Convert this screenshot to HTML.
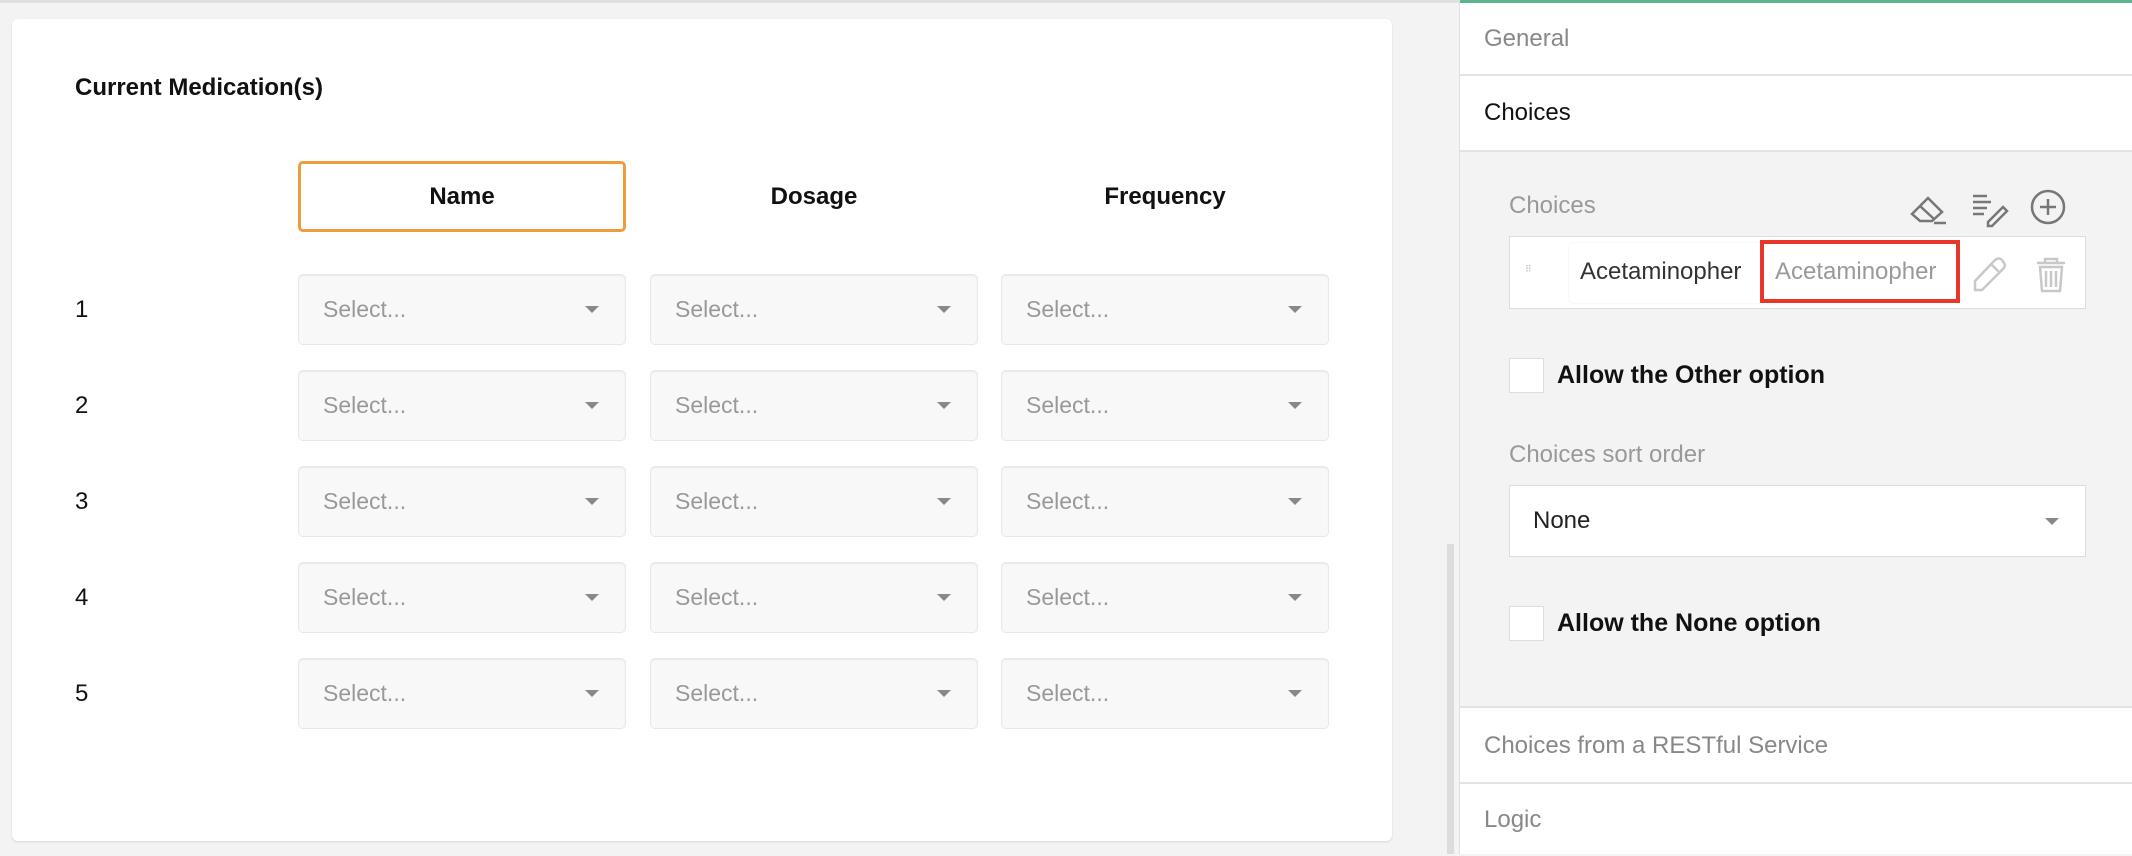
<!DOCTYPE html>
<html><head><meta charset="utf-8"><style>
*{margin:0;padding:0;box-sizing:border-box}
body{width:2132px;height:854px;overflow:hidden;background:#f3f3f3;font-family:"Liberation Sans",sans-serif;position:relative}
.a{position:absolute}
.card{left:12px;top:19px;width:1380px;height:822px;background:#fff;border-radius:6px;box-shadow:0 1px 2px rgba(0,0,0,.12)}
.sel{position:absolute;width:328px;height:71px;background:#f8f8f8;border:1px solid #e8e8e8;border-radius:5px;box-shadow:inset 0 1px 1px rgba(0,0,0,.06);color:#999;font-size:23px;line-height:69px;padding-left:24px}
.sel:after{content:"";position:absolute;right:26px;top:31px;border-left:7px solid transparent;border-right:7px solid transparent;border-top:7px solid #888}
.hdr{position:absolute;top:161px;height:71px;width:328px;text-align:center;font-size:24px;font-weight:bold;line-height:71px;color:#111}
.num{position:absolute;left:75px;font-size:24px;color:#111}
.panel{left:1459px;top:0;width:673px;height:854px;background:#fff;border-left:1px solid #e0e0e0}
.tab{position:absolute;left:0;width:673px;font-size:24px;color:#888;padding-left:24px;border-bottom:2px solid #e3e3e3}
.cb{position:absolute;left:49px;width:35px;height:35px;background:#fff;border:1px solid #ddd}
.cbl{position:absolute;left:97px;font-size:25px;font-weight:bold;color:#111}
</style></head><body>
<div class="a" style="left:0;top:0;width:1459px;height:3px;background:#e0e0e0"></div>
<div class="a card"></div>
<div class="a" style="left:75px;top:74px;font-size:24px;font-weight:bold;color:#111">Current Medication(s)</div>
<div class="hdr" style="left:298px;border:3px solid #f09c3c;border-radius:5px;line-height:65px">Name</div>
<div class="hdr" style="left:650px">Dosage</div>
<div class="hdr" style="left:1001px">Frequency</div>

<div class="num" style="top:296px">1</div>
<div class="num" style="top:392px">2</div>
<div class="num" style="top:488px">3</div>
<div class="num" style="top:584px">4</div>
<div class="num" style="top:680px">5</div>

<div class="sel" style="left:298px;top:274px">Select...</div><div class="sel" style="left:650px;top:274px">Select...</div><div class="sel" style="left:1001px;top:274px">Select...</div>
<div class="sel" style="left:298px;top:370px">Select...</div><div class="sel" style="left:650px;top:370px">Select...</div><div class="sel" style="left:1001px;top:370px">Select...</div>
<div class="sel" style="left:298px;top:466px">Select...</div><div class="sel" style="left:650px;top:466px">Select...</div><div class="sel" style="left:1001px;top:466px">Select...</div>
<div class="sel" style="left:298px;top:562px">Select...</div><div class="sel" style="left:650px;top:562px">Select...</div><div class="sel" style="left:1001px;top:562px">Select...</div>
<div class="sel" style="left:298px;top:658px">Select...</div><div class="sel" style="left:650px;top:658px">Select...</div><div class="sel" style="left:1001px;top:658px">Select...</div>

<div class="a" style="left:1447px;top:544px;width:7px;height:310px;background:#dcdcdc"></div>

<div class="a panel">
  <div class="a" style="left:0;top:0;width:673px;height:3px;background:#5db491"></div>
  <div class="tab" style="top:3px;height:73px;line-height:72px">General</div>
  <div class="tab" style="top:76px;height:76px;line-height:74px;color:#111">Choices</div>
  <div class="a" style="left:0;top:152px;width:673px;height:556px;background:#f3f3f3;border-bottom:2px solid #e3e3e3">
    <div class="a" style="left:49px;top:40px;font-size:24px;color:#999">Choices</div>
    <svg class="a" style="left:448px;top:36px" width="160" height="40" viewBox="0 0 160 40" fill="none" stroke="#777" stroke-width="2.5">
      <path d="M4 26 L20 10 L34 24 L24 33 L12 33 Z M12 18 L26 31"/><path d="M26 35 H38"/>
      <path d="M65 8 H79 M65 14 H83 M65 20 H79 M65 26 H76"/><path d="M80 34 L95 19 L99 23 L84 38 L80 38 Z"/>
      <circle cx="140" cy="19" r="16"/><path d="M140 11 V27 M132 19 H148"/>
    </svg>
    <div class="a" style="left:49px;top:84px;width:577px;height:73px;background:#fff;border:1px solid #ddd">
      <div class="a" style="left:15px;top:30px;color:#bbb;font-size:9px;line-height:5px">⠿</div>
      <div class="a" style="left:59px;top:6px;width:192px;height:60px;border-radius:4px;box-shadow:0 0 2px rgba(0,0,0,.08);overflow:hidden;font-size:24px;line-height:58px;padding-left:11px;color:#333;white-space:nowrap">Acetaminopher</div>
      <div class="a" style="left:250px;top:3px;width:200px;height:63px;border:4px solid #e8362a;overflow:hidden;font-size:24px;line-height:55px;padding-left:11px;color:#999;white-space:nowrap">Acetaminopher</div>
      <svg class="a" style="left:460px;top:18px" width="100" height="40" viewBox="0 0 100 40" fill="none" stroke="#c8c8c8" stroke-width="2.5">
        <path d="M5 33 L5 26 L25 5 Q29 2 32 5 L34 8 Q36 11 33 14 L12 35 L5 35 Z M21 9 L30 18"/>
        <path d="M67 8 H95 M75 8 V4 H87 V8 M70 12 H92 L90 36 H72 Z M76 16 V32 M81 16 V32 M86 16 V32"/>
      </svg>
    </div>
    <div class="cb" style="top:206px"></div><div class="cbl" style="top:209px">Allow the Other option</div>
    <div class="a" style="left:49px;top:289px;font-size:24px;color:#999">Choices sort order</div>
    <div class="a" style="left:49px;top:333px;width:577px;height:72px;background:#fff;border:1px solid #ddd;font-size:24px;line-height:70px;padding-left:23px;color:#222">None
      <div class="a" style="right:26px;top:32px;border-left:7px solid transparent;border-right:7px solid transparent;border-top:7px solid #888"></div></div>
    <div class="cb" style="top:454px"></div><div class="cbl" style="top:457px">Allow the None option</div>
  </div>
  <div class="tab" style="top:710px;height:74px;line-height:72px">Choices from a RESTful Service</div>
  <div class="tab" style="top:784px;height:70px;line-height:72px;border:none">Logic</div>
</div>
</body></html>
